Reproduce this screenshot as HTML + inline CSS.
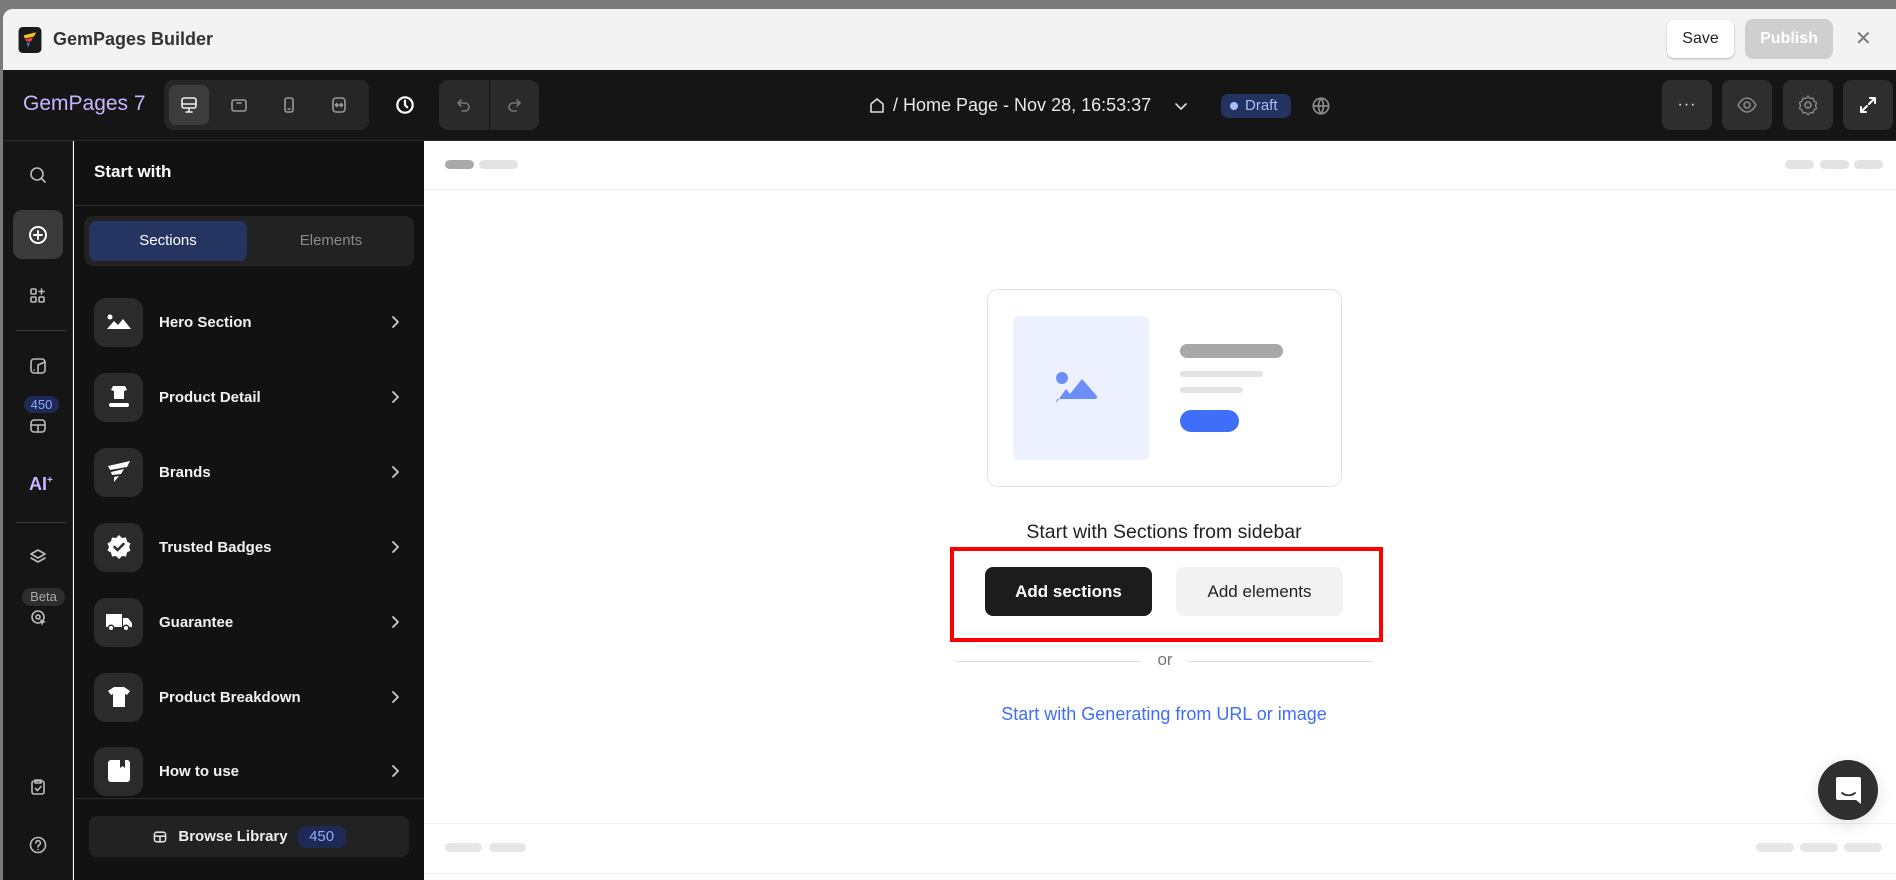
<!DOCTYPE html>
<html><head><meta charset="utf-8"><style>
*{box-sizing:border-box;margin:0;padding:0}
body{width:1896px;height:880px;overflow:hidden;background:#7a7a7a;font-family:"Liberation Sans",sans-serif;position:relative}
.a{position:absolute}
.win{left:3px;top:9px;width:1893px;height:871px;background:#fff;border-radius:10px 0 0 0;overflow:hidden}
.tb{left:0;top:0;width:1893px;height:61px;background:#f3f3f3}
.bar{left:0;top:61px;width:1893px;height:71px;background:#151515;border-bottom:1px solid #2a2a2a}
.ic{stroke:#bbb;fill:none;stroke-width:1.6;stroke-linecap:round;stroke-linejoin:round}
.rb{width:50px;height:50px;background:#2e2e2e;border-radius:8px;display:flex;align-items:center;justify-content:center}
.col{left:0;top:132px;width:70px;height:739px;background:#151515;border-right:1px solid #2c2c2c}
.pan{left:71px;top:132px;width:350px;height:739px;background:#121212}
.in{position:absolute;left:0;top:-9px;width:100%;height:100%}
.item{left:20px;width:330px;height:50px;display:flex;align-items:center}
.ib{width:49px;height:49px;border-radius:12px;background:#2b2b2b;display:flex;align-items:center;justify-content:center}
.it{color:#f2f2f2;font-size:15px;font-weight:bold;margin-left:16px;flex:1}
.ch{margin-right:22px}
.pill{height:9px;border-radius:5px;background:#e3e3e3}
</style></head><body>
<div class="a win">
 <div class="a tb">
  <svg class="a" style="left:14px;top:18px" width="26" height="26" viewBox="0 0 22 25"><rect width="22" height="25" rx="4" fill="#1a1a1a"/><path d="M5 8 L17 5 L15 9 L6 11Z" fill="#f5c518"/><path d="M6 12 L14 10 L12 14 L8 14Z" fill="#ef4444"/><path d="M8 15 L11 15 L9 20Z" fill="#3b82f6"/></svg>
  <div class="a" style="left:50px;top:20px;font-size:18px;font-weight:bold;color:#333">GemPages Builder</div>
  <div class="a" style="left:1664px;top:11px;width:67px;height:38px;background:#fff;border-radius:7px;box-shadow:0 1px 2px rgba(0,0,0,.25);font-size:16px;color:#222;text-align:center;line-height:38px">Save</div>
  <div class="a" style="left:1742px;top:10px;width:88px;height:40px;background:#cfcfcf;border-radius:8px;font-size:16px;font-weight:bold;color:#fff;text-align:center;line-height:40px">Publish</div>
  <div class="a" style="left:1852px;top:17px;font-size:20px;color:#777">✕</div>
 </div>
 <div class="a bar">
  <div class="a" style="left:20px;top:22px;font-size:21px;color:#c8b6ff">GemPages 7</div>
  <div class="a" style="left:161px;top:10px;width:205px;height:50px;background:#262626;border-radius:9px"></div>
  <div class="a" style="left:166px;top:15px;width:40px;height:40px;background:#3c3c3c;border-radius:7px"></div>
  <svg class="a" style="left:176px;top:25px" width="20" height="20" viewBox="0 0 20 20"><rect x="3" y="3" width="14" height="10" rx="2" class="ic" style="stroke:#eee"/><path d="M3 9h14M7 17h6M10 13v4" class="ic" style="stroke:#eee"/></svg>
  <svg class="a" style="left:226px;top:25px" width="20" height="20" viewBox="0 0 20 20"><rect x="3" y="5" width="14" height="11" rx="2" class="ic" style="stroke:#999"/><path d="M8 8h4" class="ic" style="stroke:#999"/></svg>
  <svg class="a" style="left:276px;top:25px" width="20" height="20" viewBox="0 0 20 20"><rect x="6" y="3" width="8" height="14" rx="2" class="ic" style="stroke:#999"/><path d="M9 14h2" class="ic" style="stroke:#999"/></svg>
  <svg class="a" style="left:326px;top:25px" width="20" height="20" viewBox="0 0 20 20"><rect x="4" y="3" width="12" height="14" rx="3" class="ic" style="stroke:#999"/><path d="M7 10h6M8 8.5l-1.5 1.5 1.5 1.5M12 8.5l1.5 1.5-1.5 1.5" class="ic" style="stroke:#999"/></svg>
  <svg class="a" style="left:391px;top:24px" width="22" height="22" viewBox="0 0 20 20"><circle cx="10" cy="10" r="7" class="ic" style="stroke:#fff;stroke-width:2"/><path d="M10 6v4l2 2" class="ic" style="stroke:#fff;stroke-width:2"/></svg>
  <div class="a" style="left:436px;top:10px;width:100px;height:50px;background:#2a2a2a;border-radius:9px"></div>
  <div class="a" style="left:486px;top:10px;width:1px;height:50px;background:#151515"></div>
  <svg class="a" style="left:451px;top:25px" width="20" height="20" viewBox="0 0 20 20"><path d="M7 5L4 8l3 3M4 8h7a4 4 0 010 8H8" class="ic" style="stroke:#777"/></svg>
  <svg class="a" style="left:501px;top:25px" width="20" height="20" viewBox="0 0 20 20"><path d="M13 5l3 3-3 3M16 8H9a4 4 0 000 8h3" class="ic" style="stroke:#777"/></svg>
  <svg class="a" style="left:864px;top:25px" width="20" height="20" viewBox="0 0 20 20"><path d="M4 9l6-5 6 5v8H4z" class="ic" style="stroke:#ddd"/></svg>
  <div class="a" style="left:890px;top:25px;font-size:18px;color:#e8e8e8">/ Home Page - Nov 28, 16:53:37</div>
  <svg class="a" style="left:1170px;top:28px" width="16" height="16" viewBox="0 0 16 16"><path d="M3 6l5 5 5-5" class="ic" style="stroke:#ddd"/></svg>
  <div class="a" style="left:1218px;top:24px;width:70px;height:24px;background:#23325e;border-radius:7px;color:#a8bdff;font-size:15px;line-height:24px;padding-left:24px">Draft</div>
  <div class="a" style="left:1227px;top:32px;width:8px;height:8px;border-radius:50%;background:#a8bdff"></div>
  <svg class="a" style="left:1307px;top:25px" width="22" height="22" viewBox="0 0 20 20"><circle cx="10" cy="10" r="7" class="ic" style="stroke:#888"/><path d="M3 10h14M10 3c-3 4-3 10 0 14M10 3c3 4 3 10 0 14" class="ic" style="stroke:#888"/></svg>
  <div class="a rb" style="left:1659px;top:10px"><span style="color:#eee;font-size:16px;letter-spacing:1px">···</span></div>
  <div class="a rb" style="left:1719px;top:10px"><svg width="22" height="22" viewBox="0 0 22 22"><path d="M2 11c3-5 6-7 9-7s6 2 9 7c-3 5-6 7-9 7s-6-2-9-7z" class="ic" style="stroke:#888"/><circle cx="11" cy="11" r="3" class="ic" style="stroke:#888"/></svg></div>
  <div class="a rb" style="left:1780px;top:10px"><svg width="22" height="22" viewBox="0 0 22 22"><circle cx="11" cy="11" r="3" class="ic" style="stroke:#888"/><path d="M11 2l2 2.5 3-.5 1 3 2.5 1.5-1 3 1 3-2.5 1.5-1 3-3-.5-2 2.5-2-2.5-3 .5-1-3-2.5-1.5 1-3-1-3L5 7l1-3 3 .5z" class="ic" style="stroke:#888;stroke-width:1.3"/></svg></div>
  <div class="a rb" style="left:1840px;top:10px"><svg width="22" height="22" viewBox="0 0 22 22"><path d="M13 4h5v5M18 4l-6 6M9 18H4v-5M4 18l6-6" class="ic" style="stroke:#fff;stroke-width:2"/></svg></div>
 </div>
 <div class="a col"><div class="in">
  <svg class="a" style="left:25px;top:33px" width="20" height="20" viewBox="0 0 20 20"><circle cx="9" cy="9" r="6" class="ic"/><path d="M13.5 13.5L17 17" class="ic"/></svg>
  <div class="a" style="left:10px;top:78px;width:50px;height:49px;background:#3a3a3a;border-radius:9px"></div>
  <svg class="a" style="left:24px;top:92px" width="22" height="22" viewBox="0 0 22 22"><circle cx="11" cy="11" r="8" class="ic" style="stroke:#fff;stroke-width:2"/><path d="M11 7v8M7 11h8" class="ic" style="stroke:#fff;stroke-width:2"/></svg>
  <svg class="a" style="left:25px;top:154px" width="20" height="20" viewBox="0 0 20 20"><rect x="3" y="3" width="5" height="5" rx="1" class="ic"/><rect x="3" y="11" width="5" height="5" rx="1" class="ic"/><rect x="11" y="11" width="5" height="5" rx="1" class="ic"/><path d="M13.5 3v5M11 5.5h5" class="ic"/></svg>
  <div class="a" style="left:13px;top:198px;width:50px;height:1px;background:#3a3a3a"></div>
  <svg class="a" style="left:25px;top:224px" width="20" height="20" viewBox="0 0 20 20"><rect x="3" y="3" width="14" height="14" rx="3" class="ic"/><path d="M10 17V9l7-3M6 14h.1" class="ic"/></svg>
  <div class="a" style="left:21px;top:264px;width:35px;height:17px;border-radius:9px;background:#1e2a55;color:#8ea8ff;font-size:13px;text-align:center;line-height:17px">450</div>
  <svg class="a" style="left:25px;top:284px" width="20" height="20" viewBox="0 0 20 20"><rect x="3" y="4" width="14" height="12" rx="3" class="ic"/><path d="M3 9h14M10 9v7" class="ic"/></svg>
  <div class="a" style="left:26px;top:342px;font-size:18px;font-weight:bold;color:#c8b6ff">AI<sup style="font-size:10px">+</sup></div>
  <div class="a" style="left:13px;top:390px;width:50px;height:1px;background:#3a3a3a"></div>
  <svg class="a" style="left:25px;top:415px" width="20" height="20" viewBox="0 0 20 20"><path d="M10 3l7 4-7 4-7-4zM3 11l7 4 7-4" class="ic"/></svg>
  <div class="a" style="left:19px;top:456px;width:43px;height:18px;border-radius:9px;background:#2e2e2e;color:#aaa;font-size:13px;text-align:center;line-height:18px">Beta</div>
  <svg class="a" style="left:26px;top:476px" width="20" height="20" viewBox="0 0 20 20"><circle cx="9" cy="9" r="6" class="ic"/><circle cx="9" cy="9" r="2" class="ic"/><path d="M11 11l6 3-3 1-1 3z" fill="#bbb"/></svg>
  <svg class="a" style="left:25px;top:645px" width="20" height="20" viewBox="0 0 20 20"><rect x="4" y="4" width="12" height="13" rx="2" class="ic"/><path d="M7 3h6v3H7zM7.5 11.5l2 2 3.5-4" class="ic"/></svg>
  <svg class="a" style="left:25px;top:703px" width="20" height="20" viewBox="0 0 20 20"><circle cx="10" cy="10" r="7.5" class="ic"/><path d="M7.8 8a2.3 2.3 0 114 1.5c-1 .8-1.8 1.2-1.8 2.5M10 14.5h.1" class="ic"/></svg>
 </div></div>
 <div class="a pan"><div class="in">
  <div class="a" style="left:20px;top:30px;font-size:17px;font-weight:bold;color:#fff">Start with</div>
  <div class="a" style="left:0;top:73px;width:350px;height:1px;background:#2c2c2c"></div>
  <div class="a" style="left:10px;top:84px;width:330px;height:50px;background:#222;border-radius:9px"></div>
  <div class="a" style="left:15px;top:89px;width:158px;height:40px;background:#263462;border-radius:7px;color:#fff;font-size:15px;text-align:center;line-height:40px">Sections</div>
  <div class="a" style="left:178px;top:89px;width:158px;height:40px;color:#8a8a8a;font-size:15px;text-align:center;line-height:40px">Elements</div>
  <div class="a item" style="top:165px"><div class="ib"><svg width="26" height="20" viewBox="0 0 26 20"><circle cx="4" cy="5" r="2.5" fill="#fff"/><path d="M1 17l7-8 4 4 5-6 8 10z" fill="#fff"/></svg></div><div class="it">Hero Section</div><svg class="ch" width="12" height="14" viewBox="0 0 12 14"><path d="M3 2l5 5-5 5" class="ic" style="stroke:#ccc;stroke-width:1.8"/></svg></div>
  <div class="a item" style="top:240px"><div class="ib"><svg width="22" height="26" viewBox="0 0 22 26"><path d="M5 2h12l2 4-3 1v8H6V7L3 6z" fill="#fff"/><rect x="1" y="19" width="20" height="4" rx="2" fill="#fff"/></svg></div><div class="it">Product Detail</div><svg class="ch" width="12" height="14" viewBox="0 0 12 14"><path d="M3 2l5 5-5 5" class="ic" style="stroke:#ccc;stroke-width:1.8"/></svg></div>
  <div class="a item" style="top:315px"><div class="ib"><svg width="26" height="24" viewBox="0 0 26 24"><path d="M2 6L24 1l-3 6L4 10z M5 12l13-3-3 5-9 1z M8 17l5-1-5 6z" fill="#fff"/></svg></div><div class="it">Brands</div><svg class="ch" width="12" height="14" viewBox="0 0 12 14"><path d="M3 2l5 5-5 5" class="ic" style="stroke:#ccc;stroke-width:1.8"/></svg></div>
  <div class="a item" style="top:390px"><div class="ib"><svg width="26" height="26" viewBox="0 0 26 26"><path d="M13 1l3 3 4-.5 1 4 3.5 2-1.5 3.5 1.5 3.5-3.5 2-1 4-4-.5-3 3-3-3-4 .5-1-4L1.5 16.5 3 13 1.5 9.5l3.5-2 1-4 4 .5z" fill="#fff"/><path d="M8.5 13l3 3 6-6" fill="none" stroke="#2b2b2b" stroke-width="2.5" stroke-linecap="round"/></svg></div><div class="it">Trusted Badges</div><svg class="ch" width="12" height="14" viewBox="0 0 12 14"><path d="M3 2l5 5-5 5" class="ic" style="stroke:#ccc;stroke-width:1.8"/></svg></div>
  <div class="a item" style="top:465px"><div class="ib"><svg width="28" height="20" viewBox="0 0 28 20"><path d="M1 2h16v13H1zM18 6h5l4 5v4h-9z" fill="#fff"/><circle cx="6" cy="16" r="2.8" fill="#fff" stroke="#2b2b2b" stroke-width="1.5"/><circle cx="21" cy="16" r="2.8" fill="#fff" stroke="#2b2b2b" stroke-width="1.5"/></svg></div><div class="it">Guarantee</div><svg class="ch" width="12" height="14" viewBox="0 0 12 14"><path d="M3 2l5 5-5 5" class="ic" style="stroke:#ccc;stroke-width:1.8"/></svg></div>
  <div class="a item" style="top:540px"><div class="ib"><svg width="24" height="22" viewBox="0 0 24 22"><path d="M7 1h10l6 4-3 4-2-1v13H6V8L4 9 1 5z" fill="#fff"/></svg></div><div class="it">Product Breakdown</div><svg class="ch" width="12" height="14" viewBox="0 0 12 14"><path d="M3 2l5 5-5 5" class="ic" style="stroke:#ccc;stroke-width:1.8"/></svg></div>
  <div class="a item" style="top:614px"><div class="ib"><svg width="24" height="24" viewBox="0 0 24 24"><rect x="1" y="1" width="22" height="22" rx="3" fill="#fff"/><path d="M13 1h5v8l-2.5-2-2.5 2z" fill="#2b2b2b"/></svg></div><div class="it">How to use</div><svg class="ch" width="12" height="14" viewBox="0 0 12 14"><path d="M3 2l5 5-5 5" class="ic" style="stroke:#ccc;stroke-width:1.8"/></svg></div>
  <div class="a" style="left:0;top:666px;width:350px;height:1px;background:#2c2c2c"></div>
  <div class="a" style="left:15px;top:684px;width:320px;height:41px;background:#222;border-radius:8px;display:flex;align-items:center;justify-content:center">
   <svg width="16" height="16" viewBox="0 0 20 20"><rect x="3" y="4" width="14" height="12" rx="3" class="ic" style="stroke:#ddd;stroke-width:2"/><path d="M3 9h14M10 9v7" class="ic" style="stroke:#ddd;stroke-width:2"/></svg>
   <span style="font-size:15px;font-weight:bold;color:#eee;margin-left:10px">Browse Library</span>
   <span style="margin-left:10px;width:48px;height:22px;border-radius:8px;background:#1e2a55;color:#8ea8ff;font-size:15px;text-align:center;line-height:22px">450</span>
  </div>
 </div></div>
 <!-- canvas -->
 <div class="a pill" style="left:442px;top:151px;width:29px;background:#aaa"></div>
 <div class="a pill" style="left:476px;top:151px;width:39px"></div>
 <div class="a pill" style="left:1782px;top:151px;width:29px"></div>
 <div class="a pill" style="left:1817px;top:151px;width:29px"></div>
 <div class="a pill" style="left:1851px;top:151px;width:29px"></div>
 <div class="a" style="left:421px;top:180px;width:1472px;height:1px;background:#f0f0f0"></div>
 <div class="a" style="left:984px;top:280px;width:355px;height:198px;border:1.5px solid #e2e2e2;border-radius:11px"></div>
 <div class="a" style="left:1010px;top:307px;width:136px;height:144px;background:#ecf0ff;border-radius:6px"></div>
 <svg class="a" style="left:1050px;top:362px" width="56" height="40" viewBox="0 0 56 40"><circle cx="9" cy="7" r="6" fill="#6c8efb"/><path d="M3 32l10-14 4 5 12-15 14 16c2 2 1 4-1 4H4z" fill="#6c8efb"/></svg>
 <div class="a" style="left:1177px;top:335px;width:103px;height:14px;border-radius:7px;background:#a8a8a8"></div>
 <div class="a" style="left:1177px;top:362px;width:83px;height:6px;border-radius:3px;background:#e3e3e3"></div>
 <div class="a" style="left:1177px;top:378px;width:63px;height:6px;border-radius:3px;background:#e3e3e3"></div>
 <div class="a" style="left:1177px;top:401px;width:59px;height:22px;border-radius:11px;background:#3f6ef8"></div>
 <div class="a" style="left:911px;top:512px;width:500px;text-align:center;font-size:19.5px;color:#222">Start with Sections from sidebar</div>
 <div class="a" style="left:947px;top:538px;width:433px;height:95px;border:4px solid #f00"></div>
 <div class="a" style="left:982px;top:558px;width:167px;height:49px;background:#1c1c1c;border-radius:8px;color:#fff;font-size:17px;font-weight:bold;text-align:center;line-height:49px">Add sections</div>
 <div class="a" style="left:1173px;top:558px;width:167px;height:49px;background:#f3f3f3;border-radius:8px;color:#222;font-size:17px;text-align:center;line-height:49px">Add elements</div>
 <div class="a" style="left:953px;top:652px;width:185px;height:1px;background:#ddd"></div>
 <div class="a" style="left:1185px;top:652px;width:185px;height:1px;background:#ddd"></div>
 <div class="a" style="left:1150px;top:641px;width:24px;text-align:center;font-size:17px;color:#777">or</div>
 <div class="a" style="left:861px;top:695px;width:600px;text-align:center;font-size:18px;color:#3f6ef8">Start with Generating from URL or image</div>
 <div class="a" style="left:421px;top:814px;width:1472px;height:1px;background:#f0f0f0"></div>
 <div class="a pill" style="left:442px;top:834px;width:37px;background:#e6e6e6"></div>
 <div class="a pill" style="left:486px;top:834px;width:37px;background:#e6e6e6"></div>
 <div class="a pill" style="left:1753px;top:834px;width:38px;background:#e6e6e6"></div>
 <div class="a pill" style="left:1797px;top:834px;width:38px;background:#e6e6e6"></div>
 <div class="a pill" style="left:1841px;top:834px;width:38px;background:#e6e6e6"></div>
 <div class="a" style="left:421px;top:864px;width:1472px;height:1px;background:#eee"></div>
 <div class="a" style="left:1815px;top:751px;width:60px;height:60px;border-radius:50%;background:#2f2f2f;box-shadow:0 4px 16px rgba(0,0,0,.12)"></div>
 <svg class="a" style="left:1832px;top:767px" width="27" height="30" viewBox="0 0 27 30"><path d="M3 1h21a2 2 0 012 2v25l-5-4H3a2 2 0 01-2-2V3a2 2 0 012-2z" fill="#fff"/><path d="M7 17c4 3 9 3 13 0" fill="none" stroke="#2f2f2f" stroke-width="1.8" stroke-linecap="round"/></svg>
</div>
</body></html>
